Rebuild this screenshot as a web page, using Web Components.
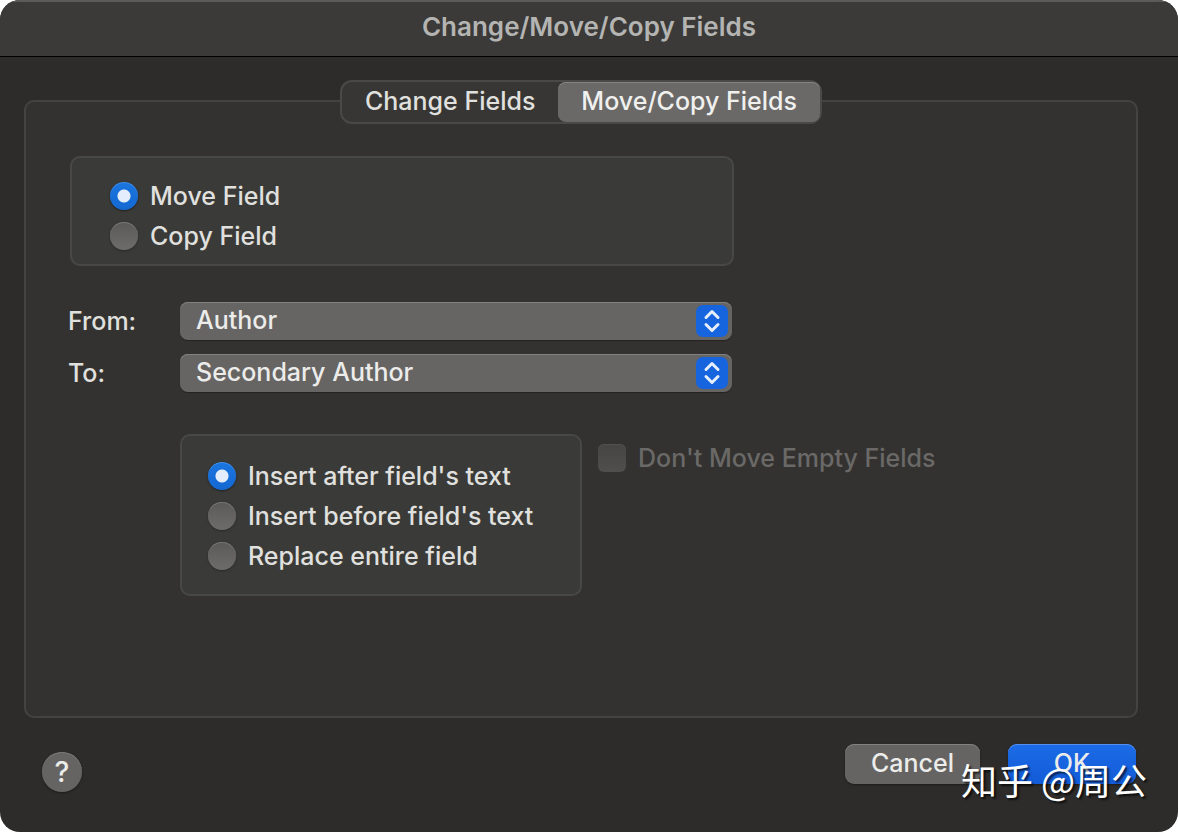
<!DOCTYPE html>
<html lang="en">
<head>
<meta charset="utf-8">
<title>Change/Move/Copy Fields</title>
<style>
    body {
        margin: 0;
        background: #fff;
        font: 500 25px/32px Inter, "Liberation Sans", "Noto Sans CJK SC", sans-serif;
        color: #e0e0df;
    }
</style>
</head>
<body>

<dialog-window heading="Change/Move/Copy Fields">
    <tab-panel>
        <tab-bar slot="tabs" tabs="Change Fields|Move/Copy Fields" selected="1"></tab-bar>
        <move-copy-form></move-copy-form>
    </tab-panel>
    <help-button slot="help"></help-button>
    <push-button slot="actions">Cancel</push-button>
    <push-button slot="actions" primary>OK</push-button>
</dialog-window>
<water-mark>知乎 @周公</water-mark>

<script>
class DialogElement extends HTMLElement {

    static template(el) {
        return ``;
    }

    constructor() {
        super();
        this.root = this.attachShadow({ mode: 'open' });
    }

    connectedCallback() {
        this.root.innerHTML = this.constructor.template(this);
    }

}

class DialogWindow extends DialogElement {

    static template(el) {
        return `
            <style>
                :host {
                    display: flex;
                    flex-direction: column;
                    min-height: 100vh;
                    box-sizing: border-box;
                    border-radius: 20px;
                    background: #2d2c2a;
                    overflow: hidden;
                }
                header {
                    background: #3b3a38;
                    border-bottom: 1px solid #000;
                    box-shadow: inset 0 2px 0 #5c5b59;
                    padding: 11px 0 13px;
                    text-align: center;
                }
                h1 {
                    margin: 0;
                    font-size: 26px;
                    font-weight: 600;
                    line-height: 32px;
                    color: #b4b4b2;
                }
                main {
                    flex: 1;
                    display: flex;
                    flex-direction: column;
                    padding: 43px 40px 26px 24px;
                }
                footer {
                    display: flex;
                    justify-content: space-between;
                    align-items: flex-end;
                    padding: 0 42px 40px;
                }
                .actions {
                    display: flex;
                    gap: 28px;
                    padding-bottom: 8px;
                }
            </style>
            <header><h1>${el.getAttribute('heading')}</h1></header>
            <main><slot></slot></main>
            <footer>
                <slot name="help"></slot>
                <div class="actions"><slot name="actions"></slot></div>
            </footer>
        `;
    }

}

class TabPanel extends DialogElement {

    static template() {
        return `
            <style>
                :host {
                    flex: 1;
                    display: flex;
                    flex-direction: column;
                    border: 2px solid #444341;
                    border-radius: 10px;
                    background: #333230;
                }
                .tabs {
                    display: flex;
                    justify-content: center;
                    margin-top: -22px;
                }
            </style>
            <div class="tabs"><slot name="tabs"></slot></div>
            <slot></slot>
        `;
    }

}

class TabBar extends DialogElement {

    static template(el) {
        const selected = Number(el.getAttribute('selected'));
        const tabs = el.getAttribute('tabs').split('|');
        return `
            <style>
                :host {
                    display: flex;
                    box-sizing: border-box;
                    height: 44px;
                    border: 2px solid #494947;
                    border-radius: 12px;
                    background: #373634;
                }
                button {
                    font: inherit;
                    color: inherit;
                    border: none;
                    border-radius: 8px;
                    background: none;
                    padding: 0 23px 2px;
                }
                button[aria-selected="true"] {
                    background: #6a6967;
                    box-shadow: inset 0 1px 0 #848381;
                    color: #f0f0ef;
                }
            </style>
            ${tabs.map((tab, i) => `<button role="tab" aria-selected="${i === selected}">${tab}</button>`).join('')}
        `;
    }

    connectedCallback() {
        super.connectedCallback();
        this.setAttribute('role', 'tablist');
        const buttons = [...this.root.querySelectorAll('button')];
        buttons.forEach(button => button.addEventListener('click', () => {
            buttons.forEach(b => b.setAttribute('aria-selected', b === button));
        }));
    }

}

class MoveCopyForm extends DialogElement {

    static template() {
        return `
            <style>
                :host {
                    display: flex;
                    flex-direction: column;
                    padding: 32px 42px 80px;
                }
                .action {
                    max-width: 664px;
                    margin-left: 2px;
                }
                .fields {
                    display: flex;
                    flex-direction: column;
                    gap: 14px;
                    max-width: 664px;
                    padding: 36px 0 42px;
                }
                .placement {
                    display: flex;
                    align-items: flex-start;
                    gap: 16px;
                    margin-left: 112px;
                }
                .placement radio-group {
                    width: 402px;
                }
                .placement check-box {
                    padding-top: 8px;
                }
            </style>
            <radio-group class="action" name="action" options="Move Field|Copy Field"
                style="--inset: 18px 38px 8px"></radio-group>
            <div class="fields">
                <popup-field label="From:" options="Author|Secondary Author"></popup-field>
                <popup-field label="To:" options="Secondary Author|Author"></popup-field>
            </div>
            <div class="placement">
                <radio-group name="placement"
                    options="Insert after field's text|Insert before field's text|Replace entire field"
                    style="--inset: 20px 26px 18px"></radio-group>
                <check-box disabled>Don't Move Empty Fields</check-box>
            </div>
        `;
    }

}

class RadioGroup extends DialogElement {

    static template(el) {
        const name = el.getAttribute('name');
        const options = el.getAttribute('options').split('|');
        return `
            <style>
                :host {
                    display: flex;
                    flex-direction: column;
                    box-sizing: border-box;
                    border: 2px solid #484846;
                    border-radius: 10px;
                    background: #3a3a38;
                    padding: var(--inset);
                }
                label {
                    display: flex;
                    align-items: center;
                    gap: 12px;
                    height: 40px;
                    white-space: nowrap;
                }
                input {
                    appearance: none;
                    flex: none;
                    width: 28px;
                    height: 28px;
                    margin: 0;
                    border-radius: 50%;
                    background: linear-gradient(#5b5a58, #6d6c6a);
                    box-shadow: inset 0 1px 0 #767573, 0 1px 2px #2a2a29;
                }
                input:checked {
                    background: radial-gradient(circle, #e3edfb 6px, transparent 7px), linear-gradient(#1b76e0, #1468d2);
                    box-shadow: inset 0 1px 0 #4591e6, 0 1px 2px #222;
                }
            </style>
            ${options.map((text, i) => `
                <label><input type="radio" name="${name}" ${i === 0 ? 'checked' : ''}><span>${text}</span></label>
            `).join('')}
        `;
    }

}

class PopupField extends DialogElement {

    static template(el) {
        const options = el.getAttribute('options').split('|');
        return `
            <style>
                :host {
                    display: grid;
                    grid-template-columns: 112px 1fr;
                    align-items: center;
                }
                .popup {
                    display: grid;
                    align-items: center;
                }
                select, svg {
                    grid-area: 1 / 1;
                }
                select {
                    appearance: none;
                    font: inherit;
                    color: #ececeb;
                    width: 100%;
                    height: 38px;
                    margin: 0;
                    border: none;
                    border-radius: 8px;
                    background: #666563;
                    box-shadow: inset 0 1px 0 #82817f, 0 1px 1px #242322;
                    padding: 0 48px 2px 16px;
                }
                svg {
                    justify-self: end;
                    margin-right: 3px;
                    pointer-events: none;
                }
            </style>
            <label for="select">${el.getAttribute('label')}</label>
            <div class="popup">
                <select id="select">${options.map(text => `<option>${text}</option>`).join('')}</select>
                <svg width="34" height="32" viewBox="0 0 34 32" fill="none">
                    <rect x="1" y="0" width="32" height="32" rx="7" fill="#1764df"/>
                    <path d="M11 12.5l6-6 6 6M11 19.5l6 6 6-6" stroke="#e6effc" stroke-width="3" stroke-linecap="round" stroke-linejoin="round"/>
                </svg>
            </div>
        `;
    }

}

class CheckBox extends DialogElement {

    static template(el) {
        return `
            <style>
                :host {
                    display: block;
                }
                label {
                    display: flex;
                    align-items: center;
                    gap: 12px;
                    white-space: nowrap;
                }
                input {
                    appearance: none;
                    flex: none;
                    width: 28px;
                    height: 28px;
                    margin: 0;
                    border-radius: 6px;
                    background: linear-gradient(#464543, #504f4d);
                    box-shadow: inset 0 1px 0 #525150;
                }
                input:disabled + span {
                    color: #6a6967;
                }
            </style>
            <label><input type="checkbox" ${el.hasAttribute('disabled') ? 'disabled' : ''}><span><slot></slot></span></label>
        `;
    }

}

class HelpButton extends DialogElement {

    static template() {
        return `
            <style>
                :host {
                    display: block;
                }
                button {
                    display: block;
                    font: inherit;
                    font-size: 28px;
                    color: #ececeb;
                    width: 40px;
                    height: 40px;
                    padding: 0;
                    border: none;
                    border-radius: 50%;
                    background: #656462;
                    box-shadow: inset 0 1px 0 #7a7977, 0 1px 2px #1c1c1b;
                }
            </style>
            <button aria-label="Help">?</button>
        `;
    }

}

class PushButton extends DialogElement {

    static template() {
        return `
            <style>
                :host {
                    display: block;
                }
                button {
                    display: block;
                    font: inherit;
                    color: #ececeb;
                    min-width: 128px;
                    height: 40px;
                    padding: 0 26px 2px;
                    border: none;
                    border-radius: 9px;
                    background: #656462;
                    box-shadow: inset 0 1px 0 #82817f, 0 1px 2px #1c1c1b;
                }
                :host([primary]) button {
                    background: linear-gradient(#1c6be6, #135bd8);
                    box-shadow: inset 0 1px 0 #5590ee, 0 1px 2px #1c1c1b;
                }
            </style>
            <button><slot></slot></button>
        `;
    }

}

class WaterMark extends DialogElement {

    static template() {
        return `
            <style>
                :host {
                    position: absolute;
                    right: 31px;
                    bottom: 29px;
                    font: 36px/48px "Noto Sans CJK SC", sans-serif;
                    color: #fff;
                    text-shadow: 2px 2px 2px rgba(0, 0, 0, 0.7);
                    white-space: nowrap;
                    pointer-events: none;
                }
            </style>
            <slot></slot>
        `;
    }

}

customElements.define('dialog-window', DialogWindow);
customElements.define('tab-panel', TabPanel);
customElements.define('tab-bar', TabBar);
customElements.define('move-copy-form', MoveCopyForm);
customElements.define('radio-group', RadioGroup);
customElements.define('popup-field', PopupField);
customElements.define('check-box', CheckBox);
customElements.define('help-button', HelpButton);
customElements.define('push-button', PushButton);
customElements.define('water-mark', WaterMark);
</script>
</body>
</html>
